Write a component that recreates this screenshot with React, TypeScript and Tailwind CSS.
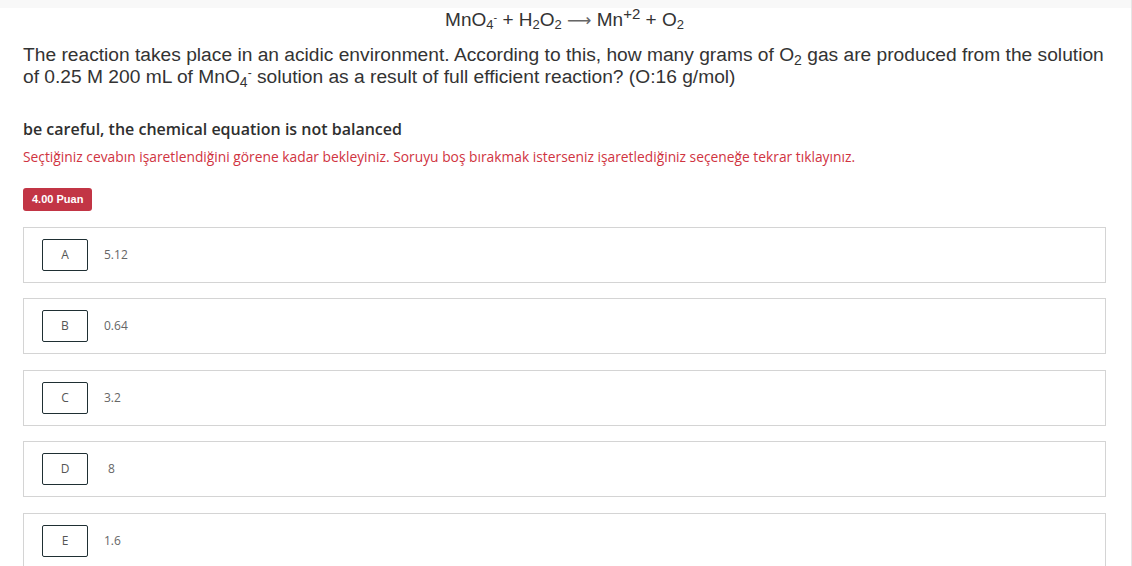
import React from "react";

const options = [
  { key: "A", value: "5.12" },
  { key: "B", value: "0.64" },
  { key: "C", value: "3.2" },
  { key: "D", value: "8" },
  { key: "E", value: "1.6" },
];

export default function App() {
  return (
    <div className="w-[1132px] h-[566px] overflow-hidden bg-white border-r border-[#e6e6e6]">
      <div className="h-[8px] bg-[#f8f8f8]" />
      <div className="pl-[23px] pr-[25px]">
        {/* equation */}
        <div
          className="text-center text-[19px] leading-[22px] text-[#333] mt-[1px]"
          style={{ fontFamily: "Arial, 'Liberation Sans', sans-serif" }}
        >
          MnO<sub className="text-[13px] leading-none">4</sub>
          <sup className="text-[11px] leading-none">-</sup> + H<sub className="text-[13px] leading-none">2</sub>O
          <sub className="text-[13px] leading-none">2</sub>{" "}
          <span className="text-[#666] text-[17px]" style={{ fontFamily: "'DejaVu Sans', sans-serif" }}>
            ⟶
          </span>{" "}
          Mn<sup className="text-[15px] leading-none">+2</sup> + O<sub className="text-[13px] leading-none">2</sub>
        </div>

        {/* question */}
        <p
          className="mt-[13px] -mr-[6px] text-[19.2px] leading-[22px] text-[#333]"
          style={{ fontFamily: "Arial, 'Liberation Sans', sans-serif" }}
        >
          The reaction takes place in an acidic environment. According to this, how many grams of O
          <sub className="text-[14px] leading-none">2</sub> gas are produced from the solution of 0.25 M 200 mL of MnO
          <sub className="text-[14px] leading-none">4</sub>
          <sup className="text-[12px] leading-none">-</sup> solution as a result of full efficient reaction? (O:16 g/mol)
        </p>

        <div style={{ fontFamily: "'Open Sans', sans-serif" }}>
          <p className="mt-[30px] text-[16px] leading-[22px] font-semibold text-[#2f2f2f]">
            be careful, the chemical equation is not balanced
          </p>
          <p className="mt-[8px] text-[13.8px] leading-[18px] text-[#d0343f]">
            Seçtiğiniz cevabın işaretlendiğini görene kadar bekleyiniz. Soruyu boş bırakmak isterseniz işaretlediğiniz seçeneğe tekrar tıklayınız.
          </p>

          <div className="mt-[19px]">
            <span
              className="inline-flex items-center h-[23px] px-[9px] rounded-[3px] bg-[#c23545] text-white text-[11px] font-bold"
              style={{ fontFamily: "Arial, 'Liberation Sans', sans-serif" }}
            >
              4.00 Puan
            </span>
          </div>

          <div className="mt-[16px] flex flex-col gap-[15.5px]">
            {options.map((o) => (
              <div
                key={o.key}
                className="h-[56px] border border-[#d4d4d4] flex items-center pl-[18px]"
              >
                <div className="w-[46px] h-[32px] border border-[#1f2f33] rounded-[2px] flex items-center justify-center text-[12px] text-[#555]">
                  {o.key}
                </div>
                <span className={`text-[12px] text-[#666] ${o.key === "D" ? "ml-[20px]" : "ml-[16px]"}`}>
                  {o.value}
                </span>
              </div>
            ))}
          </div>
        </div>
      </div>
    </div>
  );
}
